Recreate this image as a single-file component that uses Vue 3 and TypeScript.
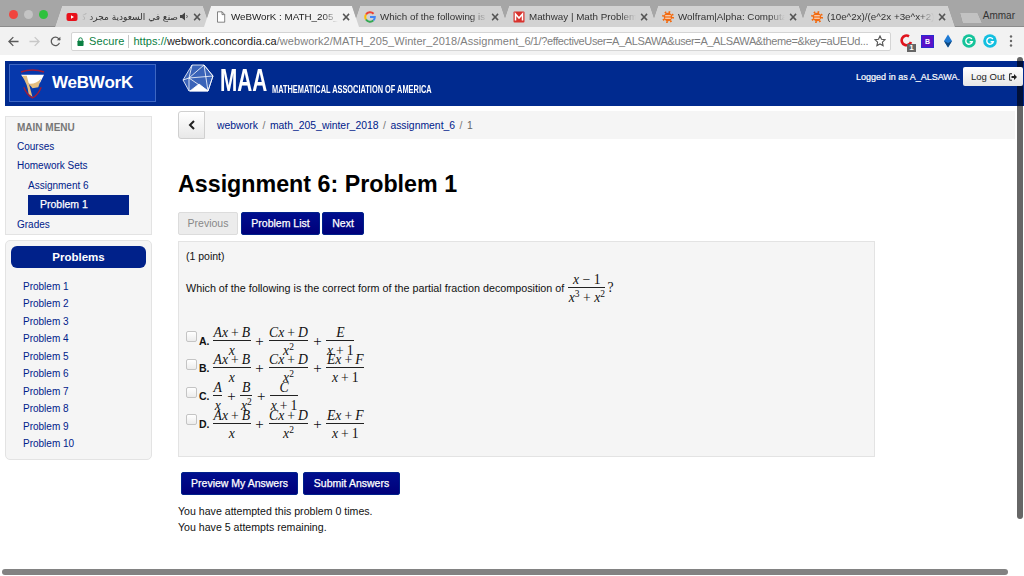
<script setup lang="ts">
interface Tab {
  title: string
  icon: string
  active?: boolean
  rtl?: boolean
}

interface Term {
  n: string
  d: string
}

const tabs: Tab[] = [
  { title: 'صنع في السعودية مجرد كذ', icon: 'youtube', rtl: true },
  { title: 'WeBWorK : MATH_205_W', icon: 'doc', active: true },
  { title: 'Which of the following is t', icon: 'google' },
  { title: 'Mathway | Math Problem', icon: 'mathway' },
  { title: 'Wolfram|Alpha: Computat', icon: 'wolfram' },
  { title: '(10e^2x)/(e^2x +3e^x+2) -', icon: 'wolfram' },
]

const menu = [
  { label: 'Courses', level: 0 },
  { label: 'Homework Sets', level: 0 },
  { label: 'Assignment 6', level: 1 },
  { label: 'Problem 1', level: 2 },
  { label: 'Grades', level: 0 },
]

const problems = Array.from({ length: 10 }, (_, i) => `Problem ${i + 1}`)

const answers: { key: string; terms: Term[] }[] = [
  { key: 'A.', terms: [{ n: 'Ax + B', d: 'x' }, { n: 'Cx + D', d: 'x^2' }, { n: 'E', d: 'x + 1' }] },
  { key: 'B.', terms: [{ n: 'Ax + B', d: 'x' }, { n: 'Cx + D', d: 'x^2' }, { n: 'Ex + F', d: 'x + 1' }] },
  { key: 'C.', terms: [{ n: 'A', d: 'x' }, { n: 'B', d: 'x^2' }, { n: 'C', d: 'x + 1' }] },
  { key: 'D.', terms: [{ n: 'Ax + B', d: 'x' }, { n: 'Cx + D', d: 'x^2' }, { n: 'Ex + F', d: 'x + 1' }] },
]

// splits "Ax + B" / "x^2" into italic letters, roman operators and exponents
function tokens(src: string) {
  const parts = src.match(/[A-Za-z]|\^\d|[^A-Za-z^]+/g) ?? []
  return parts.map((text) => {
    if (text.startsWith('^')) return { text: text.slice(1), kind: 'sup' }
    if (/[A-Za-z]/.test(text)) return { text, kind: 'var' }
    return { text: text.replace('-', '−'), kind: 'op' }
  })
}
</script>

<template>
  <div class="window">
    <!-- Browser chrome -->
    <div class="tabstrip">
      <div class="traffic">
        <span class="dot red" />
        <span class="dot grey" />
        <span class="dot green" />
      </div>
      <div class="tabs">
        <div v-for="tab in tabs" :key="tab.title" class="tab" :class="{ active: tab.active }">
          <svg v-if="tab.icon === 'youtube'" class="favicon" viewBox="0 0 12 12">
            <rect x="0.5" y="2" width="11" height="8" rx="2" fill="#e8101a" />
            <path d="M5 4.2 8 6 5 7.8z" fill="#fff" />
          </svg>
          <svg v-else-if="tab.icon === 'doc'" class="favicon" viewBox="0 0 12 12">
            <path d="M2.5.8h4.6l2.6 2.7v7.7H2.5zM7 .8v2.8h2.7" fill="#fff" stroke="#666" stroke-width=".8" />
          </svg>
          <svg v-else-if="tab.icon === 'google'" class="favicon" viewBox="0 0 12 12" fill="none" stroke-width="2">
            <path d="M9.6 2.7A4.8 4.8 0 0 0 2 3.5" stroke="#ea4335" />
            <path d="M2 3.5a4.8 4.8 0 0 0 0 5" stroke="#fbbc05" />
            <path d="M2 8.5a4.8 4.8 0 0 0 7.4.9" stroke="#34a853" />
            <path d="M9.4 9.4A4.8 4.8 0 0 0 10.800 6H6" stroke="#4285f4" />
          </svg>
          <svg v-else-if="tab.icon === 'mathway'" class="favicon" viewBox="0 0 12 12">
            <rect x="0.500" y="0.500" width="11" height="11" rx="1" fill="#d8332e" />
            <path d="M2.500 9.500V3l3.500 4 3.500-4v6.500" fill="none" stroke="#fff" stroke-width="1.500" />
          </svg>
          <svg v-else class="favicon" viewBox="0 0 12 12">
            <circle cx="6" cy="6" r="5" fill="none" stroke="#f26a10" stroke-width="2" stroke-dasharray="1.600 2.330" />
            <circle cx="6" cy="6" r="4.200" fill="#f26a10" />
            <path d="M3.200 4.800h5.600M3.200 7.200h5.600" stroke="#fff" stroke-width=".9" />
          </svg>
          <span class="tab-title" :class="{ rtl: tab.rtl }" :dir="tab.rtl ? 'rtl' : undefined">{{ tab.title }}</span>
          <svg v-if="tab.rtl" class="speaker" viewBox="0 0 9 9">
            <path d="M0 3h2l3-2.500v8L2 6H0z" fill="#444" />
            <path d="M6.500 3a2 2 0 0 1 0 3" fill="none" stroke="#444" stroke-width=".8" />
          </svg>
          <span class="tab-close">×</span>
        </div>
        <div class="new-tab" />
      </div>
      <span class="profile">Ammar</span>
    </div>

    <div class="toolbar">
      <svg class="nav-icon" viewBox="0 0 12 12" fill="none" stroke="#5a5a5a" stroke-width="1.400">
        <path d="M11.500 6H1M5.800 1.200 1 6l4.800 4.800" />
      </svg>
      <svg class="nav-icon" viewBox="0 0 12 12" fill="none" stroke="#c8c8c8" stroke-width="1.400">
        <path d="M.5 6H11M6.200 1.200 11 6l-4.800 4.800" />
      </svg>
      <svg class="nav-icon" viewBox="0 0 12 12" fill="none" stroke="#5a5a5a" stroke-width="1.400">
        <path d="M10.300 7.500A4.600 4.600 0 1 1 9.400 2.800L11 4.400" />
        <path d="M11.300.8v3.900H7.400" fill="#5a5a5a" stroke="none" />
      </svg>
      <div class="omnibox">
        <svg class="lock" viewBox="0 0 8 10">
          <rect x="0.500" y="4" width="7" height="6" rx=".8" fill="#0b8043" />
          <path d="M2 4.500V2.800a2 2 0 0 1 4 0v1.700" fill="none" stroke="#0b8043" stroke-width="1.100" />
        </svg>
        <span class="secure">Secure</span>
        <span class="divider" />
        <span class="url"><span class="https">https://</span><span class="host">webwork.concordia.ca</span>/webwork2/MATH_205_Winter_2018/Assignment_<span class="query">6/1/?effectiveUser=A_ALSAWA&amp;user=A_ALSAWA&amp;theme=&amp;key=aUEUd...</span></span>
        <svg class="star" viewBox="0 0 12 12">
          <path d="m6 1 1.500 3.300 3.500.4-2.600 2.400.7 3.500L6 8.900l-3.100 1.700.7-3.500L1 4.700l3.500-.4z" fill="none" stroke="#555" stroke-width="1.100" />
        </svg>
      </div>
      <div class="extensions">
        <span class="ext ext-opera">
          <svg viewBox="0 0 14 14" width="14" height="14">
            <path d="M9 2.300A4.800 4.800 0 1 0 11 8" fill="none" stroke="#e0141e" stroke-width="2.600" />
          </svg>
          <span class="ext-badge">1</span>
        </span>
        <span class="ext ext-b">B</span>
        <svg class="ext" viewBox="0 0 14 14">
          <path d="M7 .5 11 7 7 13.500 3 7z" fill="#1f7ad4" />
          <path d="M3 7 7 9 11 7 7 13.500z" fill="#10497f" />
        </svg>
        <svg class="ext" viewBox="0 0 14 14">
          <circle cx="7" cy="7" r="6.800" fill="#15c39a" />
          <path d="M9.800 5A3.300 3.300 0 1 0 10.300 7.800H7.600" fill="none" stroke="#fff" stroke-width="1.400" />
        </svg>
        <svg class="ext" viewBox="0 0 14 14">
          <circle cx="7" cy="7" r="6.800" fill="#13bfe0" />
          <path d="M9.800 5A3.300 3.300 0 1 0 10.300 7.800H7.600" fill="none" stroke="#fff" stroke-width="1.400" />
        </svg>
        <svg class="ext ext-menu" viewBox="0 0 4 14">
          <circle cx="2" cy="2.500" r="1.200" fill="#666" />
          <circle cx="2" cy="7" r="1.200" fill="#666" />
          <circle cx="2" cy="11.500" r="1.200" fill="#666" />
        </svg>
      </div>
    </div>

    <!-- Page -->
    <div class="page">
      <header class="masthead">
        <div class="brand">
          <svg class="shield" viewBox="0 0 26 31">
            <path d="M1 3Q13-1 25 3" fill="none" stroke="#a01c38" stroke-width="1.500" />
            <path d="M1 6h24l-4 8Q13 20 9 15z" fill="#fff" />
            <path d="M2 7h5l6 22-4-3q-1-10-7-19z" fill="#e2bd80" />
            <path d="M9 15q7 1 13-5l-3 9-6 1z" fill="#e2bd80" />
            <path d="M4 19q3 8 9 11 6-3 9-11" fill="none" stroke="#a01c38" stroke-width="1.500" />
          </svg>
          <span class="brand-name">WeBWorK</span>
        </div>
        <div class="maa">
          <svg class="maa-mark" viewBox="0 0 32 30" fill="none" stroke="#fff" stroke-width=".8">
            <path d="M10 1h12l9 11-5 15H7l-6-11z" fill="#3a63b8" />
            <path d="M10 1 7 14l15-13 4 26L7 14 1 16M7 14l-0 13M22 1l9 11-5 15M7 14l24-2" />
            <path d="M8 27l9-7 9 7z" fill="#fff" />
          </svg>
          <span class="maa-letters">MAA</span>
          <span class="maa-name">MATHEMATICAL ASSOCIATION OF AMERICA</span>
        </div>
        <div class="session">
          <span>Logged in as A_ALSAWA.</span>
          <button class="logout">
            Log Out
            <svg viewBox="0 0 8 8" width="8" height="8">
              <path d="M3 .8H.6v6.400H3" fill="none" stroke="#222" />
              <path d="M2.500 3h2.500V1l3 3-3 3V5H2.500z" fill="#222" />
            </svg>
          </button>
        </div>
      </header>

      <div class="body">
        <aside class="sidebar">
          <nav class="well menu">
            <div class="menu-head">MAIN MENU</div>
            <a
              v-for="item in menu"
              :key="item.label"
              class="menu-item"
              :class="[`level-${item.level}`, { current: item.level === 2 }]"
            >{{ item.label }}</a>
          </nav>
          <div class="well problems">
            <div class="problems-head">Problems</div>
            <a v-for="p in problems" :key="p" class="problem-link">{{ p }}</a>
          </div>
        </aside>

        <main class="content">
          <div class="crumbs">
            <button class="back">
              <svg viewBox="0 0 8 10" width="8" height="10">
                <path d="M6 1 2 5l4 4" fill="none" stroke="#222" stroke-width="2" />
              </svg>
            </button>
            <div class="crumb-bar">
              <a>webwork</a><i>/</i><a>math_205_winter_2018</a><i>/</i><a>assignment_6</a><i>/</i><span>1</span>
            </div>
          </div>

          <h1>Assignment 6: Problem 1</h1>

          <div class="pager">
            <button class="btn disabled">Previous</button>
            <button class="btn primary list">Problem List</button>
            <button class="btn primary next">Next</button>
          </div>

          <section class="problem">
            <p class="points">(1 point)</p>
            <div class="question">
              <span>Which of the following is the correct form of the partial fraction decomposition of</span>
              <span class="math frac lead">
                <span class="num"><i>x</i>&nbsp;−&nbsp;1</span>
                <span class="den"><i>x</i><sup>3</sup>&nbsp;+&nbsp;<i>x</i><sup>2</sup></span>
              </span>
              <span class="math mark">?</span>
            </div>
            <div class="answers">
              <div v-for="row in answers" :key="row.key" class="answer">
                <span class="check" />
                <b class="key">{{ row.key }}</b>
                <span class="math sum">
                  <template v-for="(term, i) in row.terms" :key="i">
                    <span v-if="i > 0" class="plus">+</span>
                    <span class="frac">
                      <span class="num">
                        <template v-for="(tk, j) in tokens(term.n)" :key="j">
                          <i v-if="tk.kind === 'var'">{{ tk.text }}</i>
                          <span v-else class="op">{{ tk.text }}</span>
                        </template>
                      </span>
                      <span class="den">
                        <template v-for="(tk, j) in tokens(term.d)" :key="j">
                          <i v-if="tk.kind === 'var'">{{ tk.text }}</i>
                          <sup v-else-if="tk.kind === 'sup'">{{ tk.text }}</sup>
                          <span v-else class="op">{{ tk.text }}</span>
                        </template>
                      </span>
                    </span>
                  </template>
                </span>
              </div>
            </div>
          </section>

          <div class="submit">
            <button class="btn primary preview">Preview My Answers</button>
            <button class="btn primary send">Submit Answers</button>
          </div>
          <p class="attempts">You have attempted this problem 0 times.<br />You have 5 attempts remaining.</p>
        </main>
      </div>
    </div>

    <!-- Overlay scrollbars -->
    <div class="scroll-v" />
    <div class="scroll-h" />
  </div>
</template>

<style>
html,
body {
  margin: 0;
  background: #fff;
}
</style>

<style scoped>
.window {
  position: relative;
  width: 1024px;
  height: 576px;
  overflow: hidden;
  display: flex;
  flex-direction: column;
  font-family: "Liberation Sans", Arial, sans-serif;
  color: #111;
  background: #fff;
}

/* tab strip */
.tabstrip {
  display: flex;
  height: 27px;
  flex: none;
  background: #a6a6a6;
  box-shadow: inset 0 -1px 0 #8c8c8c;
}

.traffic {
  display: flex;
  gap: 6px;
  width: 55px;
  flex: none;
  padding: 10px 0 0 9px;
  box-sizing: border-box;
}

.dot {
  width: 9px;
  height: 9px;
  border-radius: 50%;
}

.red { background: #f0453f; }
.grey { background: #c4c4c4; }
.green { background: #2fc13d; }

.tabs {
  display: flex;
  align-items: flex-end;
  height: 27px;
  flex: none;
  filter: drop-shadow(0 0 .6px #6e6e6e);
}

.tab {
  display: flex;
  align-items: center;
  width: 155px;
  height: 21px;
  margin-right: -6px;
  padding: 0 7px 0 11px;
  box-sizing: border-box;
  flex: none;
  background: #d2d2d2;
  clip-path: polygon(0 100%, 7px 0, calc(100% - 7px) 0, 100% 100%);
  font-size: 9.800px;
  color: #333;
}

.tab.active {
  z-index: 1;
  background: #f2f2f2;
  color: #222;
}

.favicon {
  width: 12px;
  height: 12px;
  flex: none;
  margin-right: 4px;
}

.tab-title {
  flex: 1;
  min-width: 0;
  overflow: hidden;
  white-space: nowrap;
  -webkit-mask-image: linear-gradient(270deg, transparent 0, #000 16px);
  mask-image: linear-gradient(270deg, transparent 0, #000 16px);
}

.tab-title.rtl {
  font-family: "DejaVu Sans", sans-serif;
  font-size: 9px;
  -webkit-mask-image: linear-gradient(90deg, transparent 0, #000 12px);
  mask-image: linear-gradient(90deg, transparent 0, #000 12px);
}

.speaker {
  width: 9px;
  height: 9px;
  flex: none;
  margin-left: 2px;
}

.tab-close {
  width: 12px;
  flex: none;
  margin-left: 2px;
  text-align: center;
  font-size: 14px;
  line-height: 12px;
  font-weight: 700;
  color: #555;
}

.new-tab {
  width: 22px;
  height: 10px;
  margin: 0 0 4px 11px;
  flex: none;
  background: #c2c2c2;
  clip-path: polygon(0 0, 80% 0, 100% 100%, 12% 100%);
}

.profile {
  flex: none;
  margin-left: auto;
  padding: 10px 9px 0 0;
  font-size: 10px;
  color: #333;
}

/* address bar */
.toolbar {
  display: flex;
  align-items: center;
  height: 28px;
  flex: none;
  padding: 0 0 0 8px;
  box-sizing: border-box;
  background: #f2f2f2;
}

.nav-icon {
  width: 11px;
  height: 11px;
  flex: none;
  margin-right: 10px;
}

.omnibox {
  display: flex;
  align-items: center;
  width: 820px;
  height: 19px;
  flex: none;
  padding: 0 0 0 5px;
  box-sizing: border-box;
  background: #fff;
  border: 1px solid #d4d4d4;
  border-radius: 2px;
  font-size: 11px;
}

.lock {
  width: 7px;
  height: 9px;
  flex: none;
}

.secure {
  margin-left: 5px;
  color: #0b8043;
  letter-spacing: .1px;
}

.divider {
  width: 1px;
  height: 13px;
  margin: 0 4px;
  background: #c8c8c8;
}

.url {
  flex: 1;
  min-width: 0;
  white-space: nowrap;
  overflow: hidden;
  color: #808080;
  letter-spacing: .05px;
}

.https { color: #0b8043; }
.host { color: #222; }
.query { letter-spacing: -.38px; }

.star {
  width: 12px;
  height: 12px;
  flex: none;
  margin: 0 4px 0 6px;
}

.extensions {
  display: flex;
  align-items: center;
  gap: 7px;
  margin-left: 9px;
}

.ext {
  position: relative;
  width: 14px;
  height: 14px;
  flex: none;
}

.ext-opera svg {
  display: block;
}

.ext-badge {
  position: absolute;
  right: -2px;
  bottom: -4px;
  width: 9px;
  height: 8px;
  background: #666;
  color: #fff;
  font-size: 8px;
  line-height: 8px;
  font-weight: 700;
  text-align: center;
}

.ext-b {
  width: 13px;
  height: 13px;
  background: #5a12c8;
  border: 1px solid #2a2ad0;
  box-sizing: border-box;
  color: #fff;
  font-size: 7px;
  font-weight: 700;
  line-height: 11px;
  text-align: center;
}

.ext-menu {
  width: 4px;
  margin-left: 5px;
}

/* page */
.page {
  flex: 1;
  min-height: 0;
  padding-top: 6px;
}

.masthead {
  display: flex;
  align-items: flex-start;
  height: 44.500px;
  margin-left: 5px;
  background: #002a8f;
  color: #fff;
}

.brand {
  display: flex;
  align-items: center;
  width: 147px;
  height: 38px;
  margin: 3px 0 0 4px;
  padding-left: 10px;
  box-sizing: border-box;
  background: #0638ac;
  border: 1px solid #3d66c2;
}

.shield {
  width: 25px;
  height: 30px;
  flex: none;
  margin-top: 1px;
}

.brand-name {
  margin-left: 7px;
  font-size: 17px;
  font-weight: 700;
  letter-spacing: -.2px;
}

.maa {
  display: flex;
  align-items: flex-start;
  margin-left: 26px;
}

.maa-mark {
  width: 32px;
  height: 30px;
  flex: none;
  margin-top: 3px;
}

/* no condensed face is installed, so the wordmark is squeezed horizontally */
.maa-letters {
  display: block;
  width: 47px;
  margin: 4px 0 0 6px;
  font-size: 30.500px;
  font-weight: 700;
  line-height: 30px;
  white-space: nowrap;
  transform: scaleX(.68);
  transform-origin: left;
}

.maa-name {
  display: block;
  width: 161px;
  margin: 23px 0 0 5px;
  font-size: 10px;
  line-height: 12px;
  font-weight: 700;
  white-space: nowrap;
  transform: scaleX(.74);
  transform-origin: left;
}

.session {
  display: flex;
  align-items: center;
  gap: 3px;
  margin: 6px 1px 0 auto;
  font-size: 9px;
  -webkit-text-stroke: .2px #fff;
}

.logout {
  position: relative;
  z-index: 2;
  display: flex;
  align-items: center;
  gap: 4px;
  width: 60px;
  height: 19px;
  padding: 0 0 0 8px;
  background: linear-gradient(#fff, #e6e6e6);
  border: 0;
  border-radius: 2px;
  font: 9.500px "Liberation Sans", sans-serif;
  color: #222;
  -webkit-text-stroke: 0;
}

.body {
  display: flex;
  align-items: flex-start;
  padding: 5.500px 0 0 5px;
}

.sidebar {
  width: 147px;
  flex: none;
  display: flex;
  flex-direction: column;
  gap: 5px;
  padding-top: 5px;
}

.well {
  box-sizing: border-box;
  background: #f5f5f5;
  border: 1px solid #e3e3e3;
}

.menu {
  display: flex;
  flex-direction: column;
  height: 119px;
  padding-top: 1px;
}

.menu-head,
.menu-item {
  flex: none;
  height: 19.500px;
  line-height: 19.500px;
  font-size: 10px;
  padding-left: 11px;
}

.menu-head {
  height: 18.500px;
  font-weight: 700;
  color: #777;
}

.menu-item {
  color: #00218a;
}

.level-1 {
  margin-left: 11px;
}

.level-2 {
  width: 101px;
  margin-left: 22px;
  padding-left: 12px;
  box-sizing: border-box;
  background: #00218a;
  color: #fff;
  font-size: 10.500px;
  -webkit-text-stroke: .25px #fff;
}

.problems {
  display: flex;
  flex-direction: column;
  height: 220px;
  padding: 5px;
  border-radius: 5px;
}

.problems-head {
  height: 22px;
  margin-bottom: 10px;
  flex: none;
  background: #00218a;
  border-radius: 6px;
  color: #fff;
  font-size: 11.500px;
  font-weight: 700;
  line-height: 22px;
  text-align: center;
}

.problem-link {
  height: 17.450px;
  flex: none;
  padding-left: 12px;
  color: #00218a;
  font-size: 10px;
  line-height: 17.450px;
}

.content {
  flex: 1;
  min-width: 0;
  padding-left: 26px;
}

.crumbs {
  display: flex;
  width: 837px;
  height: 28px;
}

.back {
  display: flex;
  align-items: center;
  justify-content: center;
  width: 27px;
  height: 28px;
  padding: 0;
  background: linear-gradient(#fff, #e8e8e8);
  border: 1px solid #d0d0d0;
  border-radius: 3px 0 0 3px;
}

.crumb-bar {
  flex: 1;
  display: flex;
  align-items: center;
  padding-left: 12px;
  background: #f5f5f5;
  font-size: 10.400px;
  color: #00218a;
}

.crumb-bar i {
  margin: 0 4.500px;
  font-style: normal;
  color: #777;
}

.crumb-bar span {
  color: #666;
}

h1 {
  margin: 32px 0 0;
  font-size: 23.250px;
  line-height: 26px;
  font-weight: 700;
  color: #000;
}

.pager {
  display: flex;
  gap: 2px;
  height: 23px;
  margin-top: 15px;
}

.btn {
  height: 23px;
  padding: 0 0 1px;
  box-sizing: border-box;
  border-radius: 2px;
  font: 10.500px "Liberation Sans", sans-serif;
}

.btn.disabled {
  width: 60px;
  margin-right: 1px;
  background: #ececec;
  border: 1px solid #dcdcdc;
  color: #888;
}

.btn.primary {
  background: linear-gradient(#000e8e, #00007a);
  border: 1px solid #00218a;
  color: #fff;
  -webkit-text-stroke: .25px #fff;
}

.list { width: 79px; }
.next { width: 42px; }

.problem {
  width: 697px;
  height: 216px;
  margin-top: 6px;
  box-sizing: border-box;
  padding: 0 7px;
  background: #f5f5f5;
  border: 1px solid #e3e3e3;
  font-size: 10.500px;
}

.points {
  height: 13px;
  margin: 8px 0 0;
  line-height: 13px;
}

.question {
  display: flex;
  align-items: center;
  height: 36px;
  margin-top: 7px;
  font-size: 10.750px;
}

.math {
  font-family: "Liberation Serif", "Times New Roman", serif;
  font-size: 13.700px;
  color: #111;
}

.frac {
  display: inline-flex;
  flex-direction: column;
  align-items: center;
  justify-content: center;
  white-space: nowrap;
  font-family: "Liberation Serif", "Times New Roman", serif;
  font-size: 13.700px;
}

.frac .num,
.frac .den {
  display: block;
  box-sizing: border-box;
  height: 18px;
  padding: 3px .5px 0;
  line-height: 14px;
  text-align: center;
}

.frac .num {
  width: 100%;
  border-bottom: 1px solid #222;
}

.frac i {
  font-style: italic;
}

.frac sup {
  position: relative;
  top: -5px;
  font-size: 9.500px;
  line-height: 0;
  vertical-align: baseline;
}

.op {
  white-space: pre;
  word-spacing: -.4px;
}

.lead {
  margin-left: 4px;
}

.mark {
  margin-left: 2px;
}

.answers {
  margin-top: 21px;
}

.answer {
  display: flex;
  align-items: center;
  height: 27.670px;
}

.check {
  width: 9px;
  height: 9px;
  flex: none;
  margin: -8px 2px 0 0;
  background: linear-gradient(#fff, #ececec);
  border: 1px solid #c4c4c4;
  border-radius: 2px;
}

.key {
  width: 14px;
  flex: none;
  font-size: 10.500px;
  line-height: 14px;
}

.sum {
  display: flex;
  align-items: center;
  gap: 3px;
  height: 36px;
}

.plus {
  width: 10px;
  margin: 0 1px;
  text-align: center;
  font-size: 15px;
  line-height: 14px;
}

.submit {
  display: flex;
  gap: 5px;
  margin: 15px 0 0 3px;
}

.preview { width: 117px; }
.send { width: 97px; }

.attempts {
  margin: 8px 0 0;
  font-size: 10.600px;
  line-height: 16px;
}

.scroll-v {
  position: absolute;
  top: 57px;
  left: 1017px;
  width: 6px;
  height: 462px;
  background: rgba(0, 0, 0, .6);
  border-radius: 3px;
}

.scroll-h {
  position: absolute;
  top: 569px;
  left: 2px;
  width: 1006px;
  height: 6px;
  background: #828282;
  border-radius: 3px;
}
</style>
